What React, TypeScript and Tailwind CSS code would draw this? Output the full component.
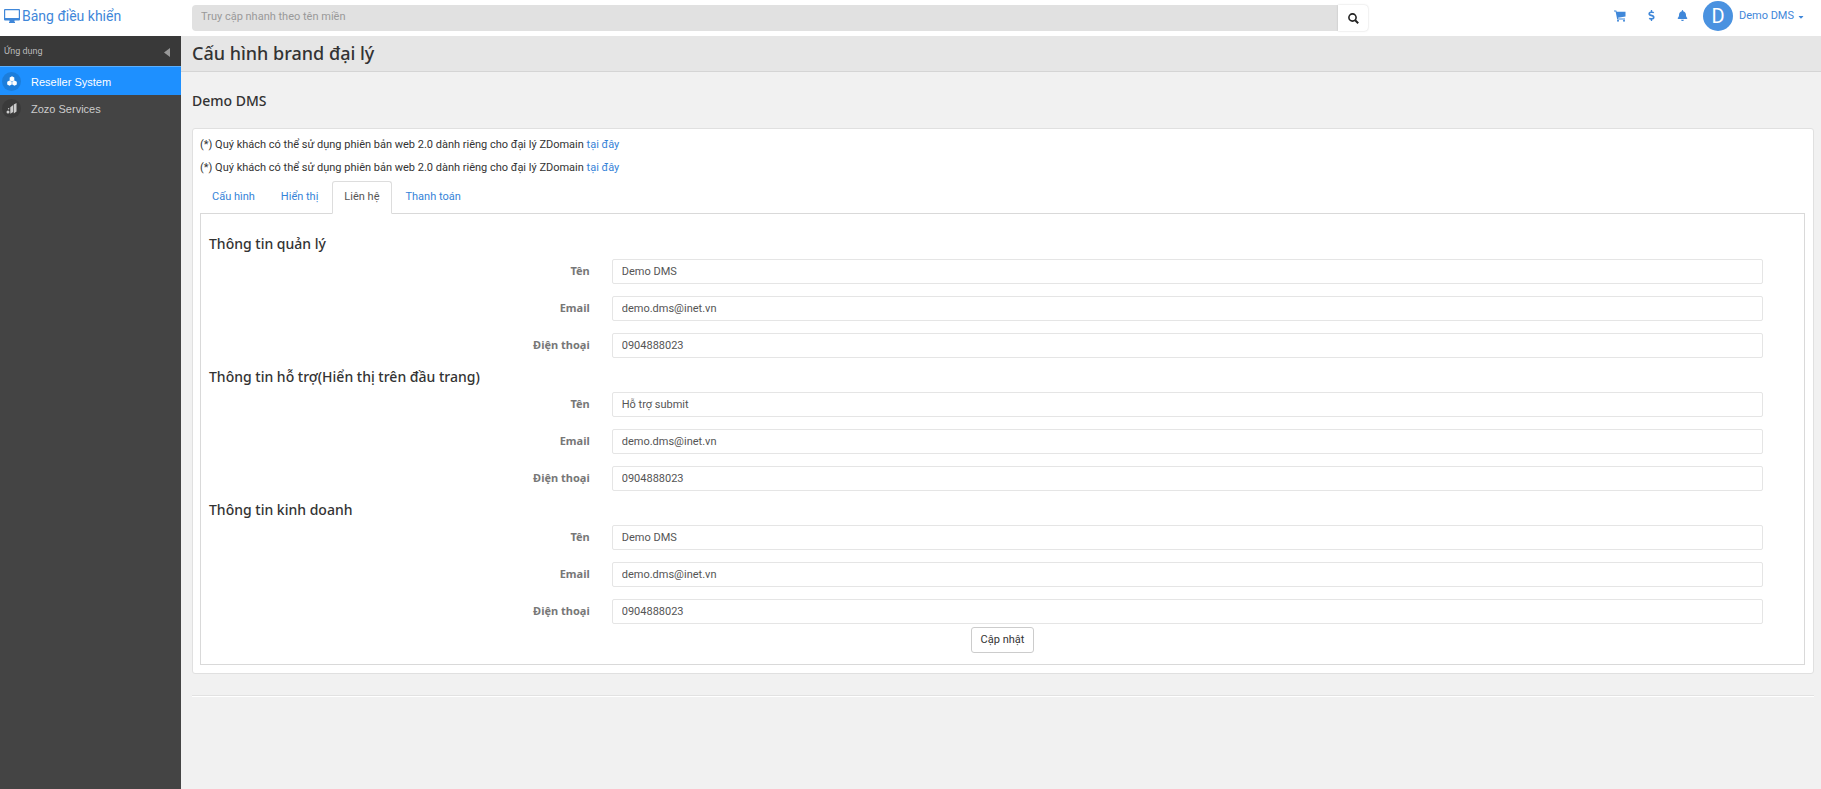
import { useState } from 'react';
import { FaBell, FaCaretDown, FaDollarSign } from 'react-icons/fa';
import clsx from 'clsx';

interface Field {
  id: string;
  label: string;
  value: string;
}

interface Section {
  title: string;
  fields: Field[];
}

const TABS = ['Cấu hình', 'Hiển thị', 'Liên hệ', 'Thanh toán'];

const SECTIONS: Section[] = [
  {
    title: 'Thông tin quản lý',
    fields: [
      { id: 'admin-name', label: 'Tên', value: 'Demo DMS' },
      { id: 'admin-email', label: 'Email', value: 'demo.dms@inet.vn' },
      { id: 'admin-phone', label: 'Điện thoại', value: '0904888023' },
    ],
  },
  {
    title: 'Thông tin hỗ trợ(Hiển thị trên đầu trang)',
    fields: [
      { id: 'support-name', label: 'Tên', value: 'Hỗ trợ submit' },
      { id: 'support-email', label: 'Email', value: 'demo.dms@inet.vn' },
      { id: 'support-phone', label: 'Điện thoại', value: '0904888023' },
    ],
  },
  {
    title: 'Thông tin kinh doanh',
    fields: [
      { id: 'sales-name', label: 'Tên', value: 'Demo DMS' },
      { id: 'sales-email', label: 'Email', value: 'demo.dms@inet.vn' },
      { id: 'sales-phone', label: 'Điện thoại', value: '0904888023' },
    ],
  },
];

function MonitorIcon() {
  return (
    <svg aria-hidden="true" width="16" height="14" viewBox="0 0 16 14" fill="currentColor">
      <path d="M1 0h14a1 1 0 0 1 1 1v9.500a1 1 0 0 1-1 1h-4.500V13h.5v1H5v-1h.5v-1.500H1a1 1 0 0 1-1-1V1a1 1 0 0 1 1-1zm.2 1.200V9h13.600V1.200z" />
    </svg>
  );
}

function CartIcon() {
  return (
    <svg aria-hidden="true" width="12" height="12" viewBox="0 0 12 12" fill="currentColor">
      <path d="M0 .5h2.300l.4 1.300H11.500v4.700L4 7.700l.2.800H11v1H3.200L1.600 1.500H0z" />
      <circle cx="4" cy="10.800" r="1" />
      <circle cx="10" cy="10.800" r="1" />
    </svg>
  );
}

function SearchIcon() {
  return (
    <svg aria-hidden="true" width="11" height="11" viewBox="0 0 11 11" fill="none" stroke="currentColor">
      <circle cx="4.500" cy="4.500" r="3.600" strokeWidth="1.600" />
      <path d="M7.200 7.200l3 3" strokeWidth="2" />
    </svg>
  );
}

function CubesIcon() {
  return (
    <svg aria-hidden="true" width="10" height="10" viewBox="0 0 10 10" fill="currentColor">
      <path d="M5 .3l2.300 1.300v2.800L5 5.500 2.700 4.400V1.600z" />
      <path d="M2.500 4.600l2.300 1.200v2.700L2.500 9.700.2 8.500V5.800z" />
      <path d="M7.500 4.600l2.300 1.200v2.700L7.500 9.700 5.200 8.500V5.800z" />
    </svg>
  );
}

function BarsIcon() {
  return (
    <svg aria-hidden="true" width="11" height="11" viewBox="0 0 11 11" fill="currentColor">
      <path d="M7.800 1.500L10.500 0v8.500L7.800 10.500z" />
      <path d="M4.300 4.200L7.200 2v7L4.300 10.700z" />
      <circle cx="2" cy="9" r="1.500" />
      <circle cx="2.600" cy="5.800" r=".7" />
    </svg>
  );
}

function TopBar() {
  return (
    <header className="flex h-9 items-center bg-white text-[#3f87d9]">
      <a href="#" className="flex w-48 shrink-0 items-center gap-[2px] pb-1 pl-1 text-sm">
        <MonitorIcon />
        Bảng điều khiển
      </a>
      <form className="flex h-[26px] w-[1176px] min-w-0" onSubmit={(e) => e.preventDefault()}>
        <input
          type="search"
          aria-label="Truy cập nhanh theo tên miền"
          placeholder="Truy cập nhanh theo tên miền"
          className="min-w-0 flex-1 rounded-l bg-[#e1e1e1] px-[9px] pb-px text-[11px] text-[#555] outline-none placeholder:text-[#999]"
        />
        <button
          type="submit"
          aria-label="Tìm kiếm"
          className="flex w-[30px] items-center justify-center rounded-r text-[#222] shadow-[0_0_2px_rgba(0,0,0,0.2)]"
        >
          <SearchIcon />
        </button>
      </form>
      <nav className="ml-auto flex items-center pr-4 pb-[5px]">
        <a href="#" aria-label="Giỏ hàng" className="mr-5">
          <CartIcon />
        </a>
        <a href="#" aria-label="Số dư" className="mr-5">
          <FaDollarSign size={11} />
        </a>
        <a href="#" aria-label="Thông báo" className="mr-[15px]">
          <FaBell size={11} />
        </a>
        <button type="button" className="flex items-center gap-[6px] text-[11px]">
          <span className="flex size-[30px] items-center justify-center rounded-full bg-[#4a92e0] text-xl text-white">
            D
          </span>
          <span className="flex items-center gap-[3px] pt-[2px]">
            Demo DMS
            <FaCaretDown aria-hidden="true" size={8} />
          </span>
        </button>
      </nav>
    </header>
  );
}

function Sidebar() {
  return (
    <aside className="w-[181px] shrink-0 bg-[#444] text-[#ccc]">
      <div className="flex h-[30px] items-center justify-between bg-[#393939] pt-[2px] pr-[11px] pl-1 text-[9px] text-[#bbb]">
        Ứng dụng
        <button type="button" aria-label="Thu gọn">
          <svg aria-hidden="true" width="6" height="9" viewBox="0 0 6 9" fill="#999">
            <path d="M6 0v9L0 4.500z" />
          </svg>
        </button>
      </div>
      <nav className="font-['Liberation_Sans',sans-serif] text-[11px]">
        <a
          href="#"
          className="flex h-[29px] items-center gap-[10px] border-t border-[#5bb0ff] bg-[#1e90ff] pl-[2px] text-white"
        >
          <span className="flex size-[19px] items-center justify-center rounded-full bg-[#1c7ddb]">
            <CubesIcon />
          </span>
          <span className="pt-[2px]">Reseller System</span>
        </a>
        <a href="#" className="flex h-[27px] items-center gap-[10px] pl-[2px]">
          <span className="flex size-[19px] items-center justify-center rounded-full bg-[#3a3a3a]">
            <BarsIcon />
          </span>
          <span className="pt-[2px]">Zozo Services</span>
        </a>
      </nav>
    </aside>
  );
}

function Notice() {
  return (
    <p className="h-[23px] leading-[19px]">
      (*) Quý khách có thể sử dụng phiên bản web 2.0 dành riêng cho đại lý ZDomain{' '}
      <a href="#" className="text-[#3583d8]">
        tại đây
      </a>
    </p>
  );
}

function FormSection({ title, fields }: Section) {
  return (
    <fieldset>
      <legend className="mb-[7px] font-['Noto_Sans',sans-serif] text-sm leading-4 font-medium text-[#333]">
        {title}
      </legend>
      <div className="flex flex-col gap-3">
        {fields.map((field) => (
          <div key={field.id} className="flex h-[25px] items-center gap-[22px] pr-[33px]">
            <label
              htmlFor={field.id}
              className="w-[24.5%] shrink-0 pb-px text-right font-['Noto_Sans',sans-serif] font-bold text-[#777]"
            >
              {field.label}
            </label>
            <input
              id={field.id}
              type="text"
              defaultValue={field.value}
              className="h-full min-w-0 flex-1 rounded-[2px] border border-[#e5e5e5] px-[9px] pb-px text-[#555] outline-none"
            />
          </div>
        ))}
      </div>
    </fieldset>
  );
}

export default function App() {
  const [activeTab, setActiveTab] = useState('Liên hệ');

  return (
    <div className="flex min-h-screen flex-col bg-[#f1f1f1] font-['Roboto',sans-serif] text-[11px] text-[#333]">
      <TopBar />
      <div className="flex flex-1">
        <Sidebar />
        <main className="min-w-0 flex-1">
          <h1 className="h-9 border-b border-[#d5d5d5] bg-[#e6e6e6] pl-[11px] font-['Noto_Sans',sans-serif] text-lg leading-[34px] font-medium">
            Cấu hình brand đại lý
          </h1>
          <div className="pr-[7px] pl-[11px]">
            <h2 className="pt-[19px] pb-[17px] font-['Noto_Sans',sans-serif] text-sm font-medium">Demo DMS</h2>
            <section className="rounded-[3px] border border-[#e0e0e0] bg-white pt-[6px] pr-2 pb-2 pl-[7px]">
              <Notice />
              <Notice />
              <div role="tablist" className="flex gap-[2px]">
                {TABS.map((tab) => (
                  <button
                    key={tab}
                    type="button"
                    role="tab"
                    aria-selected={tab === activeTab}
                    onClick={() => setActiveTab(tab)}
                    className={clsx(
                      '-mb-px h-[33px] rounded-t-[3px] border px-[11px]',
                      tab === activeTab
                        ? 'border-[#ddd] border-b-white bg-white text-[#555]'
                        : 'border-transparent text-[#3583d8]',
                    )}
                  >
                    {tab}
                  </button>
                ))}
              </div>
              <form
                role="tabpanel"
                className="border border-[#d9d9d9] px-2 pt-[22px] pb-[11px]"
                onSubmit={(e) => e.preventDefault()}
              >
                <div className="flex flex-col gap-[11px]">
                  {SECTIONS.map((section) => (
                    <FormSection key={section.title} {...section} />
                  ))}
                </div>
                <div className="mt-[3px] flex justify-center">
                  <button type="submit" className="h-[26px] rounded-[3px] border border-[#ccc] bg-white px-[9px]">
                    Cập nhật
                  </button>
                </div>
              </form>
            </section>
            <hr className="mt-[21px] h-[2px] border-t border-b border-t-[#e2e2e2] border-b-white" />
          </div>
        </main>
      </div>
    </div>
  );
}
